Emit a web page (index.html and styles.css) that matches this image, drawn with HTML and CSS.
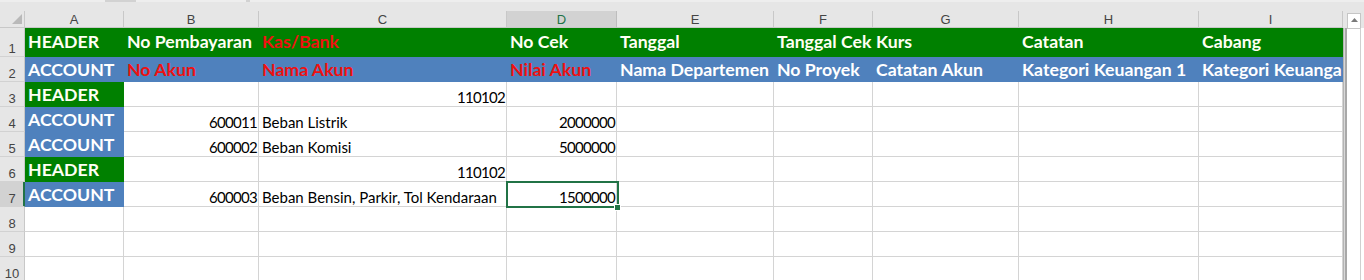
FILE: index.html
```html
<!DOCTYPE html>
<html lang="id">
<head>
<meta charset="utf-8">
<title>Sheet</title>
<link rel="stylesheet" href="styles.css">
</head>
<body>
<div class="app">
  <div class="topstrip">
    <span class="seg lt w105"></span><span class="seg dk w31"></span><span class="seg lt w110"></span><span class="seg dk w4"></span><span class="seg lt grow"></span>
  </div>
  <div class="work">
    <div class="sheet">
      <!-- column header row -->
      <div class="corner"><svg width="10" height="10" viewBox="0 0 10 10"><polygon points="10,0 10,10 0,10" fill="#b9b9b9"/></svg></div>
      <div class="ch">A</div>
      <div class="ch">B</div>
      <div class="ch">C</div>
      <div class="ch chsel">D</div>
      <div class="ch">E</div>
      <div class="ch">F</div>
      <div class="ch">G</div>
      <div class="ch">H</div>
      <div class="ch">I</div>

      <!-- row 1 -->
      <div class="rh">1</div>
      <div class="c g hd r1">HEADER</div>
      <div class="c g hd r1">No Pembayaran</div>
      <div class="c g hd r1 red">Kas/Bank</div>
      <div class="c g hd r1">No Cek</div>
      <div class="c g hd r1">Tanggal</div>
      <div class="c g hd r1">Tanggal Cek</div>
      <div class="c g hd r1">Kurs</div>
      <div class="c g hd r1">Catatan</div>
      <div class="c g hd r1">Cabang</div>

      <!-- row 2 -->
      <div class="rh">2</div>
      <div class="c b hd">ACCOUNT</div>
      <div class="c b hd red">No Akun</div>
      <div class="c b hd red">Nama Akun</div>
      <div class="c b hd red">Nilai Akun</div>
      <div class="c b hd">Nama Departemen</div>
      <div class="c b hd">No Proyek</div>
      <div class="c b hd">Catatan Akun</div>
      <div class="c b hd">Kategori Keuangan 1</div>
      <div class="c b hd">Kategori Keuangan 2</div>

      <!-- row 3 -->
      <div class="rh">3</div>
      <div class="c g hd">HEADER</div>
      <div class="c"></div>
      <div class="c num">110102</div>
      <div class="c"></div>
      <div class="c"></div>
      <div class="c"></div>
      <div class="c"></div>
      <div class="c"></div>
      <div class="c"></div>

      <!-- row 4 -->
      <div class="rh">4</div>
      <div class="c b hd">ACCOUNT</div>
      <div class="c num">600011</div>
      <div class="c">Beban Listrik</div>
      <div class="c num">2000000</div>
      <div class="c"></div>
      <div class="c"></div>
      <div class="c"></div>
      <div class="c"></div>
      <div class="c"></div>

      <!-- row 5 -->
      <div class="rh">5</div>
      <div class="c b hd">ACCOUNT</div>
      <div class="c num">600002</div>
      <div class="c">Beban Komisi</div>
      <div class="c num">5000000</div>
      <div class="c"></div>
      <div class="c"></div>
      <div class="c"></div>
      <div class="c"></div>
      <div class="c"></div>

      <!-- row 6 -->
      <div class="rh">6</div>
      <div class="c g hd">HEADER</div>
      <div class="c"></div>
      <div class="c num">110102</div>
      <div class="c"></div>
      <div class="c"></div>
      <div class="c"></div>
      <div class="c"></div>
      <div class="c"></div>
      <div class="c"></div>

      <!-- row 7 -->
      <div class="rh rhsel">7</div>
      <div class="c b hd">ACCOUNT</div>
      <div class="c num">600003</div>
      <div class="c">Beban Bensin, Parkir, Tol Kendaraan</div>
      <div class="c num active">1500000<span class="selbox"></span><span class="handle"></span></div>
      <div class="c"></div>
      <div class="c"></div>
      <div class="c"></div>
      <div class="c"></div>
      <div class="c"></div>

      <!-- row 8 -->
      <div class="rh">8</div>
      <div class="c"></div><div class="c"></div><div class="c"></div><div class="c"></div><div class="c"></div><div class="c"></div><div class="c"></div><div class="c"></div><div class="c"></div>

      <!-- row 9 -->
      <div class="rh">9</div>
      <div class="c"></div><div class="c"></div><div class="c"></div><div class="c"></div><div class="c"></div><div class="c"></div><div class="c"></div><div class="c"></div><div class="c"></div>

      <!-- row 10 -->
      <div class="rh">10</div>
      <div class="c"></div><div class="c"></div><div class="c"></div><div class="c"></div><div class="c"></div><div class="c"></div><div class="c"></div><div class="c"></div><div class="c"></div>
    </div>

    <div class="rpanel">
      <div class="rp-top">
        <div class="rp-gap"></div>
        <div class="vs-up"><svg width="7" height="4" viewBox="0 0 7 4"><polygon points="3.5,0 7,4 0,4" fill="#7a7a7a"/></svg></div>
      </div>
      <div class="rp-body">
        <div class="rp-sep"></div>
        <div class="vs-track"></div>
        <div class="rp-end"></div>
      </div>
    </div>
  </div>
</div>
</body>
</html>
```

FILE: styles.css
```css
html, body {
  margin: 0;
  padding: 0;
}

body {
  width: 1364px;
  height: 280px;
  overflow: hidden;
  background: #e6e6e6;
}

.app {
  display: flex;
  flex-direction: column;
  width: 1364px;
}

/* thin strip at very top */
.topstrip {
  height: 11px;
  display: flex;
  align-items: flex-start;
}

.seg {
  height: 2px;
}

.seg.lt { background: #eeeeee; }
.seg.dk { background: #d2d2d2; }
.w105 { width: 105px; }
.w31 { width: 31px; }
.w110 { width: 110px; }
.w4 { width: 4px; }
.grow { flex: 1; }

.work {
  display: flex;
  align-items: stretch;
}

.sheet {
  display: grid;
  grid-template-columns: 25px 99px 135px 248px 110px 157px 99px 146px 180px 144px;
  grid-template-rows: 17px 29px 25px repeat(8, 25px);
  background: #ffffff;
  width: 1343px;
}

/* corner */
.corner {
  box-sizing: border-box;
  background: #e6e6e6;
  border-right: 1px solid #c8c8c8;
  border-bottom: 1px solid #c8c8c8;
  display: flex;
  justify-content: flex-end;
  align-items: flex-end;
  padding: 0 2px 3px 0;
}

.corner svg {
  display: block;
}

/* column header */
.ch {
  box-sizing: border-box;
  background: #e6e6e6;
  border-right: 1px solid #c8c8c8;
  border-bottom: 1px solid #c8c8c8;
  display: flex;
  justify-content: center;
  align-items: flex-end;
  font-family: "Liberation Sans", Arial, sans-serif;
  font-size: 13px;
  line-height: 15px;
  color: #444444;
  padding-bottom: 0;
}

.ch.chsel {
  background: #d2d2d2;
  color: #217346;
  border-right-color: #bdbdbd;
}

/* row header */
.rh {
  box-sizing: border-box;
  background: #e6e6e6;
  border-right: 1px solid #c8c8c8;
  border-bottom: 1px solid #d2d2d2;
  display: flex;
  justify-content: center;
  align-items: flex-end;
  font-family: "Liberation Sans", Arial, sans-serif;
  font-size: 13px;
  line-height: 15px;
  color: #444444;
}

.rh.rhsel {
  background: #d2d2d2;
  border-right-color: #217346;
  box-shadow: inset -1px 0 0 #217346;
}

/* cells */
.c {
  box-sizing: border-box;
  border-right: 1px solid #d4d4d4;
  border-bottom: 1px solid #d4d4d4;
  overflow: hidden;
  white-space: nowrap;
  display: flex;
  align-items: flex-end;
  padding: 0 2px 0 3px;
  font-family: Lato, "Liberation Sans", sans-serif;
  font-size: 15px;
  line-height: 17px;
  color: #000000;
}

.c.num {
  justify-content: flex-end;
  letter-spacing: -0.7px;
  padding-right: 1px;
}

.c.g {
  background: #008000;
  border-color: #008000;
}

.c.b {
  background: #4f81bd;
  border-color: #4f81bd;
}

.c.hd {
  font-weight: 700;
  font-size: 17.7px;
  line-height: 18px;
  color: #ffffff;
  padding-bottom: 2px;
}

.c.g.hd {
  color: #fffff4;
}

.c.hd.r1 {
  padding-bottom: 5px;
}

.c.hd.red {
  color: #ee1111;
}

/* active cell */
.c.active {
  position: relative;
  overflow: visible;
}

.selbox {
  position: absolute;
  left: -1px;
  top: -1px;
  width: 113px;
  height: 27px;
  box-sizing: border-box;
  border: 2px solid #217346;
  pointer-events: none;
}

.handle {
  position: absolute;
  left: 107px;
  top: 22px;
  width: 7px;
  height: 7px;
  box-sizing: border-box;
  background: #217346;
  border: 1px solid #ffffff;
}

/* right panel / scrollbar */
.rpanel {
  width: 21px;
  display: flex;
  flex-direction: column;
}

.rp-top {
  height: 17px;
  display: flex;
  background: #e6e6e6;
}

.rp-gap {
  width: 4px;
}

.vs-up {
  box-sizing: border-box;
  width: 14px;
  height: 15px;
  margin-top: 2px;
  background: #ffffff;
  border: 1px solid #c6c6c6;
  border-bottom: none;
  display: flex;
  justify-content: center;
  align-items: center;
}

.vs-up svg {
  display: block;
  margin-top: -3px;
}

.rp-body {
  flex: 1;
  display: flex;
  background: #ffffff;
}

.rp-sep {
  box-sizing: border-box;
  width: 4px;
  background: #d8d8d8;
  border-left: 1px solid #b4b4b4;
  border-right: 2px solid #a8a8a8;
}

.vs-track {
  box-sizing: border-box;
  width: 14px;
  background: #ffffff;
  border-top: 1px solid #c6c6c6;
  border-right: 1px solid #d0d0d0;
}

.rp-end {
  flex: 1;
  background: #ffffff;
}
```
